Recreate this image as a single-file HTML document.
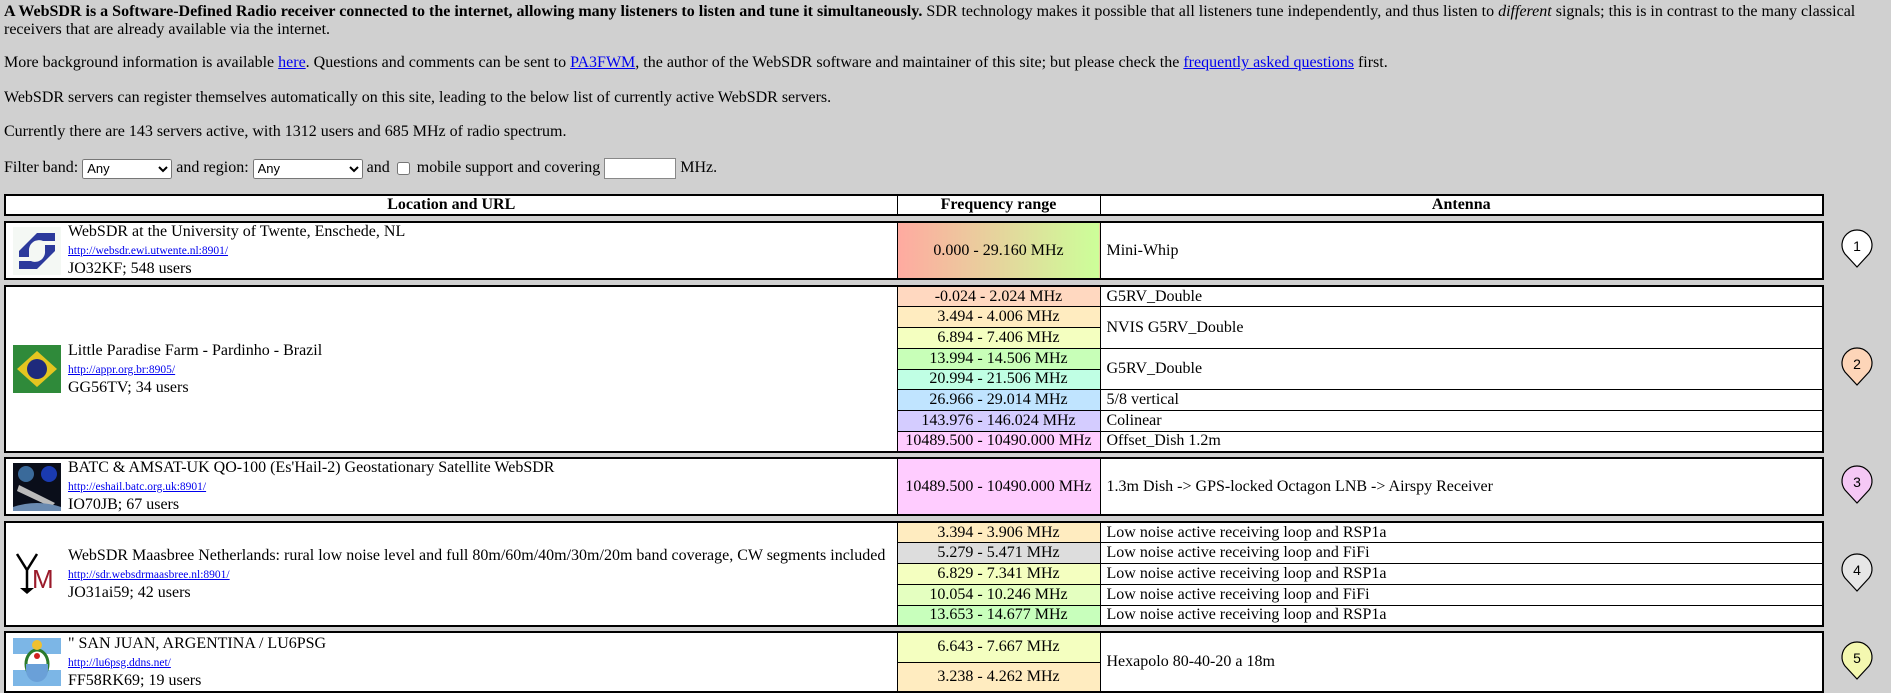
<!DOCTYPE html>
<html><head><meta charset="utf-8"><style>
body{margin:0;background:#d0d0d0;font-family:"Liberation Serif",serif;font-size:16px;color:#000;width:1891px;height:692px;overflow:hidden;position:relative}
p{margin:0;position:absolute;left:4px;line-height:18px;white-space:nowrap}
a{color:#00e}
table{position:absolute;left:4px;width:1820px;border-collapse:collapse;table-layout:fixed;border:2px solid #000;background:#fff}
td,th{border:1px solid #000;padding:0 0 0 6px;line-height:18px;white-space:nowrap;overflow:hidden}
.f{text-align:center;padding:0}
.loc{vertical-align:middle;padding:0 0 0 7px}
.lc{display:flex;align-items:center}
.lg{flex:none;margin-right:7px;display:block}
.tx{line-height:18px}
.tx a{font-size:11.5px}
.mk{position:absolute;left:1840px}
select{font-family:"Liberation Sans",sans-serif;font-size:13px;height:20px;vertical-align:middle}
</style></head><body>
<p style="top:3px"><b>A WebSDR is a Software-Defined Radio receiver connected to the internet, allowing many listeners to listen and tune it simultaneously.</b> SDR technology makes it possible that all listeners tune independently, and thus listen to <i>different</i> signals; this is in contrast to the many classical<br>receivers that are already available via the internet.</p>
<p style="top:54px">More background information is available <a href="#">here</a>. Questions and comments can be sent to <a href="#">PA3FWM</a>, the author of the WebSDR software and maintainer of this site; but please check the <a href="#">frequently asked questions</a> first.</p>
<p style="top:89px">WebSDR servers can register themselves automatically on this site, leading to the below list of currently active WebSDR servers.</p>
<p style="top:123px">Currently there are 143 servers active, with 1312 users and 685 MHz of radio spectrum.</p>
<p style="top:158px">Filter band: <select style="width:90px"><option>Any</option></select> and region: <select style="width:110px"><option>Any</option></select> and <input type="checkbox" style="margin:0 3px;vertical-align:middle"> mobile support and covering <input type="text" style="width:66px;height:17px;vertical-align:middle;border:1px solid #888"> MHz.</p>

<table style="top:194px;height:22px"><colgroup><col style="width:892px"><col style="width:203px"><col></colgroup><tr><th style="padding:0">Location and URL</th><th style="padding:0">Frequency range</th><th style="padding:0">Antenna</th></tr></table>

<table style="top:221px;height:58px"><colgroup><col style="width:892px"><col style="width:203px"><col></colgroup><tr style="height:54px"><td class="loc"><div class="lc">
<svg class="lg" width="48" height="48" viewBox="0 0 48 48"><rect width="48" height="48" fill="#f4f8f4"/><path d="M6 24 L24 6 L42 6 L42 14 L30 14 A10 10 0 0 0 16 24 L16 30 L6 30Z" fill="#2c3a9c"/><path d="M42 24 L24 42 L6 42 L6 34 L18 34 A10 10 0 0 0 32 24 L32 18 L42 18Z" fill="#2c3a9c"/></svg>
<div class="tx">WebSDR at the University of Twente, Enschede, NL<br><a href="#">http://websdr.ewi.utwente.nl:8901/</a><br>JO32KF; 548 users</div></div></td>
<td class="f" style="background:linear-gradient(90deg,#ffaaa0,#ccff99)">0.000 - 29.160 MHz</td><td>Mini-Whip</td></tr></table>

<table style="top:285px;height:168px"><colgroup><col style="width:892px"><col style="width:203px"><col></colgroup>
<tr style="height:20.5px"><td class="loc" rowspan="8"><div class="lc">
<svg class="lg" width="48" height="48" viewBox="0 0 48 48"><rect width="48" height="48" fill="#2f8a3a"/><path d="M24 6 L44 24 L24 42 L4 24Z" fill="#e4c520"/><circle cx="24" cy="24" r="10" fill="#1e2a7c"/></svg>
<div class="tx">Little Paradise Farm - Pardinho - Brazil<br><a href="#">http://appr.org.br:8905/</a><br>GG56TV; 34 users</div></div></td>
<td class="f" style="background:#ffd8c0">-0.024 - 2.024 MHz</td><td>G5RV_Double</td></tr>
<tr style="height:20.5px"><td class="f" style="background:#ffecc0">3.494 - 4.006 MHz</td><td rowspan="2">NVIS G5RV_Double</td></tr>
<tr style="height:20.5px"><td class="f" style="background:#f4ffc0">6.894 - 7.406 MHz</td></tr>
<tr style="height:20.5px"><td class="f" style="background:#c8ffb8">13.994 - 14.506 MHz</td><td rowspan="2">G5RV_Double</td></tr>
<tr style="height:20.5px"><td class="f" style="background:#c0ffe4">20.994 - 21.506 MHz</td></tr>
<tr style="height:20.5px"><td class="f" style="background:#c0e4ff">26.966 - 29.014 MHz</td><td>5/8 vertical</td></tr>
<tr style="height:20.5px"><td class="f" style="background:#d4ccff">143.976 - 146.024 MHz</td><td>Colinear</td></tr>
<tr style="height:20.5px"><td class="f" style="background:#ffccff">10489.500 - 10490.000 MHz</td><td>Offset_Dish 1.2m</td></tr>
</table>

<table style="top:457px;height:59px"><colgroup><col style="width:892px"><col style="width:203px"><col></colgroup><tr style="height:55px"><td class="loc"><div class="lc">
<svg class="lg" width="48" height="48" viewBox="0 0 48 48"><rect width="48" height="48" fill="#0a0e1a"/><circle cx="13" cy="11" r="8" fill="#3a6a9a"/><circle cx="36" cy="11" r="8" fill="#1a3ab0"/><path d="M6 22 L42 40 L38 44 L4 28Z" fill="#bbb"/><path d="M0 44 Q24 36 48 44 L48 48 L0 48Z" fill="#6a8ab0"/></svg>
<div class="tx">BATC &amp; AMSAT-UK QO-100 (Es'Hail-2) Geostationary Satellite WebSDR<br><a href="#">http://eshail.batc.org.uk:8901/</a><br>IO70JB; 67 users</div></div></td>
<td class="f" style="background:#ffccff">10489.500 - 10490.000 MHz</td><td>1.3m Dish -&gt; GPS-locked Octagon LNB -&gt; Airspy Receiver</td></tr></table>

<table style="top:521px;height:106px"><colgroup><col style="width:892px"><col style="width:203px"><col></colgroup>
<tr style="height:20.8px"><td class="loc" rowspan="5"><div class="lc">
<svg class="lg" width="48" height="48" viewBox="0 0 48 48"><path d="M4 4 L14 20 L24 4 M14 20 L14 40" stroke="#000" stroke-width="2.5" fill="none"/><path d="M7 38 L21 38 L14 44Z" fill="#000"/><text x="19" y="38" font-family="Liberation Sans,sans-serif" font-size="26" fill="#9a1a2a">M</text></svg>
<div class="tx">WebSDR Maasbree Netherlands: rural low noise level and full 80m/60m/40m/30m/20m band coverage, CW segments included<br><a href="#">http://sdr.websdrmaasbree.nl:8901/</a><br>JO31ai59; 42 users</div></div></td>
<td class="f" style="background:#ffecc0">3.394 - 3.906 MHz</td><td>Low noise active receiving loop and RSP1a</td></tr>
<tr style="height:20.8px"><td class="f" style="background:#dddddd">5.279 - 5.471 MHz</td><td>Low noise active receiving loop and FiFi</td></tr>
<tr style="height:20.8px"><td class="f" style="background:#f4ffc0">6.829 - 7.341 MHz</td><td>Low noise active receiving loop and RSP1a</td></tr>
<tr style="height:20.8px"><td class="f" style="background:#e4ffc0">10.054 - 10.246 MHz</td><td>Low noise active receiving loop and FiFi</td></tr>
<tr style="height:20.8px"><td class="f" style="background:#c8ffbc">13.653 - 14.677 MHz</td><td>Low noise active receiving loop and RSP1a</td></tr>
</table>

<table style="top:631px;height:62px"><colgroup><col style="width:892px"><col style="width:203px"><col></colgroup>
<tr style="height:29px"><td class="loc" rowspan="2"><div class="lc">
<svg class="lg" width="48" height="48" viewBox="0 0 48 48"><rect width="48" height="48" fill="#fff"/><rect width="48" height="16" fill="#7cb6e6"/><rect y="32" width="48" height="16" fill="#7cb6e6"/><ellipse cx="24" cy="26" rx="11" ry="14" fill="#fff" stroke="#2a7a2a" stroke-width="3"/><path d="M13 26 L35 26 L35 32 A11 12 0 0 1 13 32Z" fill="#6aa0d8"/><circle cx="24" cy="18" r="3" fill="#d02020"/><circle cx="24" cy="7" r="5" fill="#f0c030"/></svg>
<div class="tx">" SAN JUAN, ARGENTINA / LU6PSG<br><a href="#">http://lu6psg.ddns.net/</a><br>FF58RK69; 19 users</div></div></td>
<td class="f" style="background:#f4ffc0">6.643 - 7.667 MHz</td><td rowspan="2">Hexapolo 80-40-20 a 18m</td></tr>
<tr style="height:29px"><td class="f" style="background:#ffecc0">3.238 - 4.262 MHz</td></tr>
</table>

<svg class="mk" style="top:229px" width="34" height="40" viewBox="0 0 34 40"><path d="M17 38 L5 25 A15 15 0 1 1 29 25 Z" fill="#fff" stroke="#000" stroke-width="1.2"/><text x="17" y="22" text-anchor="middle" font-family="Liberation Sans,sans-serif" font-size="14">1</text></svg>
<svg class="mk" style="top:347px" width="34" height="40" viewBox="0 0 34 40"><path d="M17 38 L5 25 A15 15 0 1 1 29 25 Z" fill="#fdd5b8" stroke="#000" stroke-width="1.2"/><text x="17" y="22" text-anchor="middle" font-family="Liberation Sans,sans-serif" font-size="14">2</text></svg>
<svg class="mk" style="top:465px" width="34" height="40" viewBox="0 0 34 40"><path d="M17 38 L5 25 A15 15 0 1 1 29 25 Z" fill="#f5c8f5" stroke="#000" stroke-width="1.2"/><text x="17" y="22" text-anchor="middle" font-family="Liberation Sans,sans-serif" font-size="14">3</text></svg>
<svg class="mk" style="top:553px" width="34" height="40" viewBox="0 0 34 40"><path d="M17 38 L5 25 A15 15 0 1 1 29 25 Z" fill="#e6e6e6" stroke="#000" stroke-width="1.2"/><text x="17" y="22" text-anchor="middle" font-family="Liberation Sans,sans-serif" font-size="14">4</text></svg>
<svg class="mk" style="top:641px" width="34" height="40" viewBox="0 0 34 40"><path d="M17 38 L5 25 A15 15 0 1 1 29 25 Z" fill="#f4f8b0" stroke="#000" stroke-width="1.2"/><text x="17" y="22" text-anchor="middle" font-family="Liberation Sans,sans-serif" font-size="14">5</text></svg>
</body></html>
